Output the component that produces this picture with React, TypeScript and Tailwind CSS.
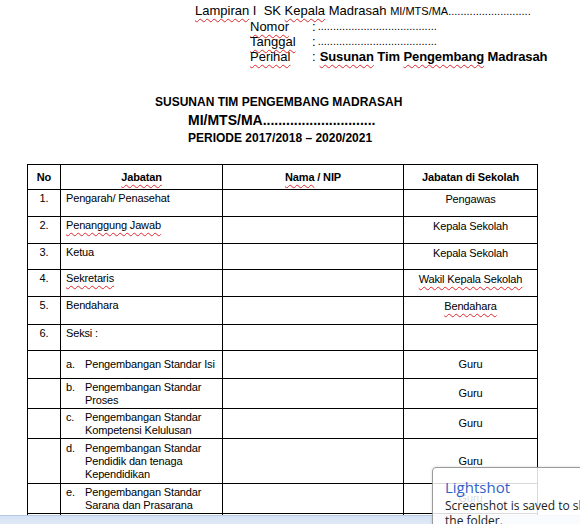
import type React from "react"

function Sq({ children }: { children: React.ReactNode }) {
  // Word spell-check squiggle
  return (
    <span className="underline decoration-wavy decoration-[#e0262b] decoration-1 underline-offset-[3px]">
      {children}
    </span>
  )
}

interface MainRow {
  no: string
  jabatan: React.ReactNode
  sekolah: React.ReactNode
  h: string
}

interface SubRow {
  letter: string
  text: string
  h: string
}

const mainRows: MainRow[] = [
  { no: "1.", jabatan: "Pengarah/ Penasehat", sekolah: "Pengawas", h: "h-[27px]" },
  { no: "2.", jabatan: <Sq>Penanggung Jawab</Sq>, sekolah: "Kepala Sekolah", h: "h-[27px]" },
  { no: "3.", jabatan: "Ketua", sekolah: "Kepala Sekolah", h: "h-[26px]" },
  { no: "4.", jabatan: <Sq>Sekretaris</Sq>, sekolah: <Sq>Wakil Kepala Sekolah</Sq>, h: "h-[27px]" },
  { no: "5.", jabatan: "Bendahara", sekolah: <Sq>Bendahara</Sq>, h: "h-[28px]" },
  { no: "6.", jabatan: "Seksi :", sekolah: "", h: "h-[26px]" },
]

const subRows: SubRow[] = [
  { letter: "a.", text: "Pengembangan Standar Isi", h: "h-[28px]" },
  { letter: "b.", text: "Pengembangan Standar Proses", h: "h-[30px]" },
  { letter: "c.", text: "Pengembangan Standar Kompetensi Kelulusan", h: "h-[30px]" },
  { letter: "d.", text: "Pengembangan Standar Pendidik dan tenaga Kependidikan", h: "h-[45px]" },
  { letter: "e.", text: "Pengembangan Standar Sarana dan Prasarana", h: "h-[30px]" },
]

export default function App() {
  return (
    <div className="relative w-[580px] h-[524px] overflow-hidden bg-white text-black font-['Liberation_Sans',Arial,sans-serif] flex flex-col">
      {/* document page */}
      <div className="flex-1 overflow-hidden">
        {/* letter header */}
        <div className="pl-[195px] pt-[3px] text-[13px] leading-[15px]">
          <div className="whitespace-nowrap">
            <Sq>Lampiran</Sq> I&nbsp; SK <Sq>Kepala</Sq> Madrasah{" "}
            <span className="text-[11px]">MI/MTS/MA...........................</span>
          </div>
          <div className="ml-[55px]">
            <div className="flex whitespace-nowrap">
              <span className="w-[62px]"><Sq>Nomor</Sq></span>
              <span>:</span>
              <span className="ml-[2px] text-[11px]">.......................................</span>
            </div>
            <div className="flex whitespace-nowrap">
              <span className="w-[62px]"><Sq>Tanggal</Sq></span>
              <span>:</span>
              <span className="ml-[2px] text-[11px]">.......................................</span>
            </div>
            <div className="flex whitespace-nowrap">
              <span className="w-[62px]"><Sq>Perihal</Sq></span>
              <span>:</span>
              <span className="ml-[4px] font-bold tracking-[-0.1px]">
                <Sq>Susunan</Sq> Tim <Sq>Pengembang</Sq> Madrasah
              </span>
            </div>
          </div>
        </div>

        {/* title */}
        <div className="mt-[30px] pl-[155px] font-bold whitespace-nowrap">
          <div className="text-[12px] leading-[16px]">SUSUNAN TIM PENGEMBANG MADRASAH</div>
          <div className="ml-[33px] text-[14px] leading-[20px]">MI/MTS/MA.............................</div>
          <div className="ml-[33px] text-[12px] leading-[16px]">PERIODE 2017/2018 – 2020/2021</div>
        </div>

        {/* table */}
        <table className="mt-[18px] ml-[27px] w-[510px] table-fixed border-collapse text-[11px] leading-[13px] tracking-[-0.15px]">
          <colgroup>
            <col className="w-[33px]" />
            <col className="w-[162px]" />
            <col className="w-[181px]" />
            <col className="w-[134px]" />
          </colgroup>
          <thead>
            <tr className="h-[25px] font-bold">
              <th className="border border-black p-0 text-center align-middle">No</th>
              <th className="border border-black p-0 text-center align-middle"><Sq>Jabatan</Sq></th>
              <th className="border border-black p-0 text-center align-middle"><Sq>Nama</Sq> / NIP</th>
              <th className="border border-black p-0 text-center align-middle">Jabatan di Sekolah</th>
            </tr>
          </thead>
          <tbody>
            {mainRows.map((r) => (
              <tr key={r.no} className={r.h}>
                <td className="border border-black p-0 pt-[2px] text-center align-top">{r.no}</td>
                <td className="border border-black p-0 pt-[2px] pl-[5px] align-top">{r.jabatan}</td>
                <td className="border border-black p-0" />
                <td className="border border-black p-0 pt-[3px] text-center align-top">{r.sekolah}</td>
              </tr>
            ))}
            {subRows.map((r) => (
              <tr key={r.letter} className={r.h}>
                <td className="border border-black p-0" />
                <td className="border border-black p-0 pl-[5px] pr-[2px] align-middle">
                  <div className="flex">
                    <span className="w-[19px] shrink-0">{r.letter}</span>
                    <span>{r.text}</span>
                  </div>
                </td>
                <td className="border border-black p-0" />
                <td className="border border-black p-0 text-center align-middle">Guru</td>
              </tr>
            ))}
            <tr className="h-[30px]">
              <td className="border border-black p-0" />
              <td className="border border-black p-0" />
              <td className="border border-black p-0" />
              <td className="border border-black p-0" />
            </tr>
          </tbody>
        </table>
      </div>

      {/* status bar */}
      <div className="h-[9px] shrink-0 border-t border-[#b6c9e4] bg-gradient-to-b from-[#d6e3f4] to-[#dfe9f7]" />

      {/* Lightshot notification */}
      <div className="absolute left-[432px] top-[467px] w-[200px] h-[80px] rounded-tl-[4px] border border-[#9a9a9a] bg-white/85 pl-[12px] pt-[10px] font-['Open_Sans','Noto_Sans',sans-serif] shadow-[0_0_3px_rgba(0,0,0,0.15)]">
        <div className="text-[15px] leading-[18px] text-[#2f62c9]">Lightshot</div>
        <div className="mt-[2px] text-[12px] leading-[15px] text-[#222] whitespace-nowrap">
          Screenshot is saved to sk the
        </div>
        <div className="text-[12px] leading-[15px] text-[#222]">the folder.</div>
      </div>
    </div>
  )
}
